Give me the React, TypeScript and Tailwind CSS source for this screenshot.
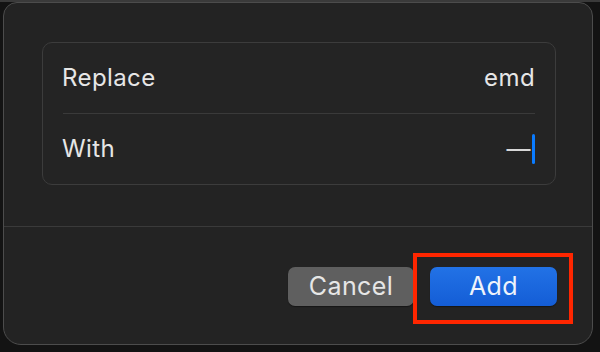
import React from 'react'

const font = { fontFamily: 'Inter, "Noto Sans", "Liberation Sans", sans-serif' }

function Row({ label, children }: { label: string; children: React.ReactNode }) {
  return (
    <div className="flex h-[70px] items-center justify-between pl-[19px] pr-[20px]">
      <span>{label}</span>
      {children}
    </div>
  )
}

export default function App() {
  return (
    <div
      className="w-[600px] h-[352px] overflow-hidden bg-[#131313] text-[24px] tracking-[0.4px] text-[#e6e6e6] leading-none"
      style={font}
    >
      {/* strip of the window behind */}
      <div className="h-[2px] bg-[#3a3a3a]" />

      <div className="pl-[3px] pr-[7px]">
        {/* Dialog */}
        <div className="h-[343px] rounded-t-[14px] rounded-b-[18px] border border-[#4c4c4c] bg-[#232323] flex flex-col">
          {/* Fields */}
          <div className="pt-[39px] pl-[38px] pr-[36px]">
            <div className="rounded-[10px] border border-[#3c3c3c] bg-[#242424]">
              <Row label="Replace">
                <span>emd</span>
              </Row>
              <div className="mx-[20px] h-px bg-[#3a3a3a]" />
              <Row label="With">
                <span className="flex items-center">
                  <span className="text-[#d8d8d8]">—</span>
                  <span className="ml-[1px] w-[3px] h-[30px] rounded-full bg-[#0a7bff]" />
                </span>
              </Row>
            </div>
          </div>

          <div className="mt-[41px] h-px bg-[#3a3a3a]" />

          {/* Buttons */}
          <div className="flex justify-end gap-[16px] pt-[40px] pr-[35px]">
            <button className="w-[126px] h-[39px] rounded-[7px] bg-[#5f5f5f] text-[25px] text-[#e6e6e6] shadow-[0_1px_1px_rgba(0,0,0,0.4)]">
              Cancel
            </button>
            <div className="relative">
              <button className="w-[127px] h-[39px] rounded-[7px] bg-gradient-to-b from-[#2272e6] to-[#145dd6] text-[25px] text-[#eef3fb] shadow-[0_1px_1px_rgba(0,0,0,0.4)]">
                Add
              </button>
              <span className="pointer-events-none absolute -left-[17px] -top-[14px] -right-[16px] -bottom-[18px] border-[4px] border-[#ff2600]" />
            </div>
          </div>
        </div>
      </div>
    </div>
  )
}
